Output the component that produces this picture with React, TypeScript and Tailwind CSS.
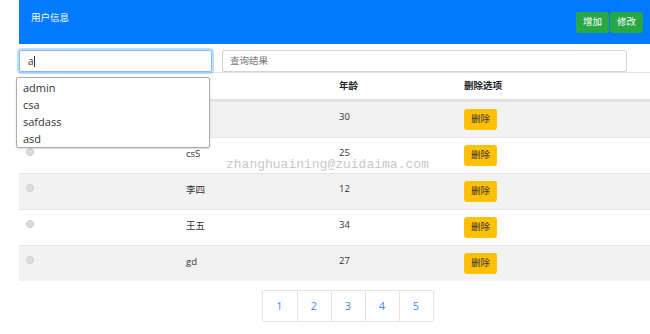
import React from 'react';

const rows = [
  { name: '', age: '30' },
  { name: 'csS', age: '25' },
  { name: '李四', age: '12' },
  { name: '王五', age: '34' },
  { name: 'gd', age: '27' },
];

const font = { fontFamily: '"Open Sans", "Noto Sans CJK SC", sans-serif' };

export default function App() {
  return (
    <div className="relative w-[650px] h-[334px] bg-white overflow-hidden text-[#333]" style={font}>
      <div className="pl-[19px]">
        {/* header bar */}
        <div className="h-[44px] bg-[#007bff] flex items-center justify-between pl-3 pr-[7px]">
          <span className="text-white text-[9.5px] -mt-[7px]">用户信息</span>
          <div className="flex mt-[1px]">
            <button className="h-[21px] w-[33px] bg-[#28a745] text-white text-[9.5px] rounded-[3px]">增加</button>
            <button className="h-[21px] w-[33px] bg-[#28a745] text-white text-[9.5px] rounded-[3px] ml-px">修改</button>
          </div>
        </div>

        {/* search row */}
        <div className="flex gap-[10px] mt-[6px] h-[22px]">
          <div className="w-[193px] h-[22px] border border-[#80bdff] rounded-[2px] shadow-[0_0_0_2px_rgba(0,123,255,0.25)] flex items-center px-[8px] text-[10px]">
            a<span className="w-px h-[11px] bg-[#333]" />
          </div>
          <div className="w-[405px] h-[22px] border border-[#ced4da] rounded-[2px] flex items-center px-[7px] text-[9.5px] text-[#777]">
            查询结果
          </div>
        </div>

        {/* table */}
        <div className="border-t border-[#dee2e6]">
          <div className="flex h-[28px] items-center border-b-2 border-[#dee2e6] text-[9.5px] font-bold text-[#212529]">
            <div className="w-[320px]" />
            <div className="w-[125px]">年龄</div>
            <div>删除选项</div>
          </div>
          {rows.map((r, i) => (
            <div
              key={i}
              className={`flex h-[36px] border-t border-[#e6e6e6] text-[9.5px] ${i % 2 === 0 ? 'bg-[#f2f2f2]' : 'bg-white'}`}
            >
              <div className="w-[167px] pl-[7px] pt-[10px]">
                <span className="block w-[8px] h-[8px] rounded-full bg-[#dcdcdc] border border-[#cdcdcd]" />
              </div>
              <div className="w-[153px] pt-[9px]">{r.name}</div>
              <div className="w-[125px] pt-[8px]">{r.age}</div>
              <div className="pt-[7px]">
                <button className="h-[21px] w-[33px] bg-[#ffc107] rounded-[3px] text-[9.5px] text-[#333]">删除</button>
              </div>
            </div>
          ))}
        </div>

        {/* pagination */}
        <div className="flex justify-center mt-[9px] pl-[26px]">
          <div className="flex border border-[#e4e4e4] rounded-[2px]">
            {[1, 2, 3, 4, 5].map((n, i) => (
              <div
                key={n}
                className={`w-[34px] h-[30px] flex items-center justify-center text-[11px] text-[#3d8bfd] ${i > 0 ? 'border-l border-[#e4e4e4]' : ''}`}
              >
                {n}
              </div>
            ))}
          </div>
        </div>
      </div>

      {/* autocomplete dropdown */}
      <div className="absolute left-[16px] top-[77px] w-[194px] h-[71px] bg-white border border-[#a9a9a9] rounded-[2px] shadow-[0_1px_2px_rgba(0,0,0,0.15)] pl-[6px] pt-[1px] text-[11px] leading-[17px] text-[#333]">
        <div>admin</div>
        <div>csa</div>
        <div>safdass</div>
        <div>asd</div>
      </div>

      {/* watermark */}
      <div
        className="absolute left-[226px] top-[155px] text-[13px] text-[#c8c8c8]"
        style={{ fontFamily: '"Liberation Mono", monospace' }}
      >
        zhanghuaining@zuidaima.com
      </div>
    </div>
  );
}
